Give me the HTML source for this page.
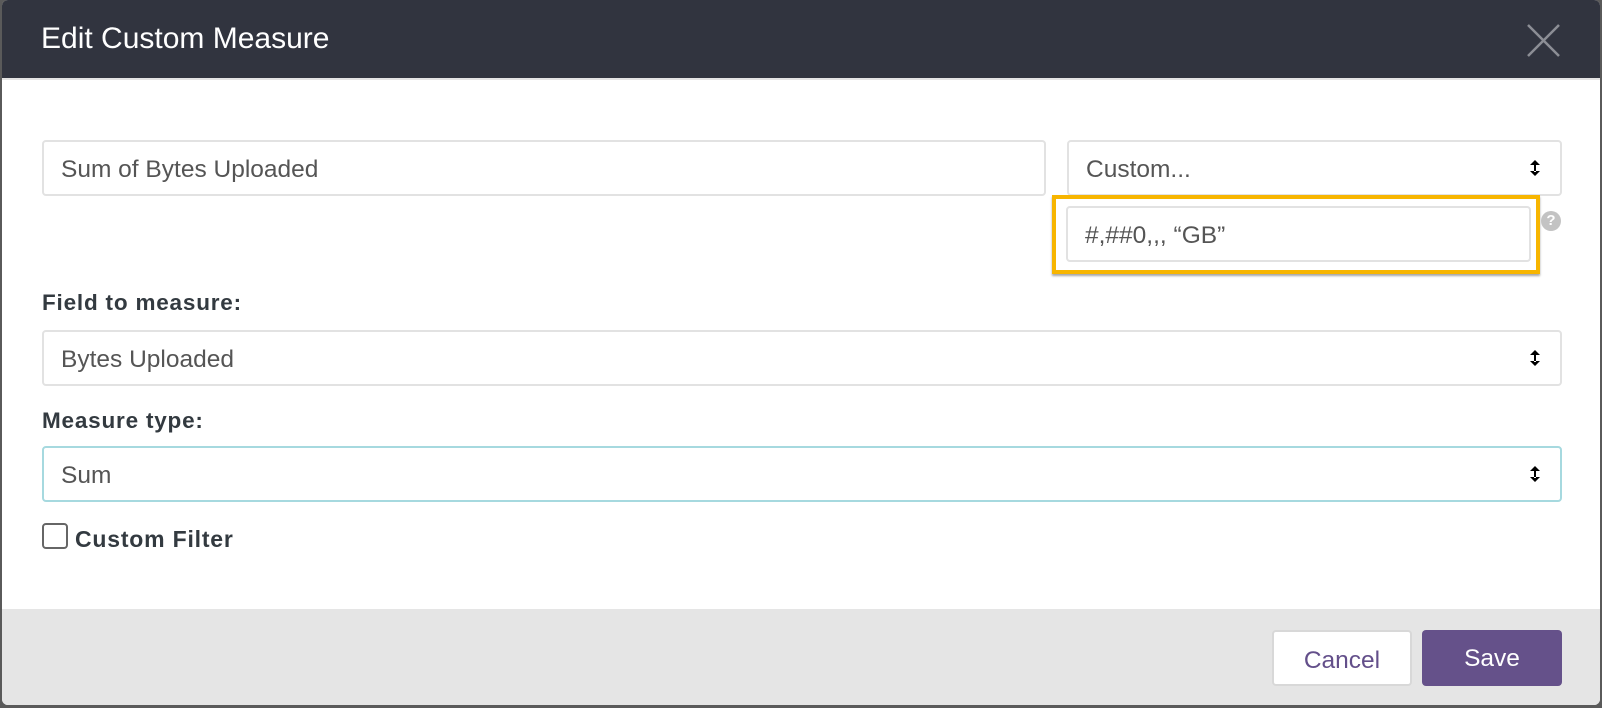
<!DOCTYPE html>
<html><head><style>
*{box-sizing:border-box;margin:0;padding:0}
body{width:1602px;height:708px;background:#5a5a5a;position:relative;overflow:hidden;font-family:"Liberation Sans",sans-serif}
.modal{position:absolute;left:2px;top:0;width:1598px;height:705px;background:#fff;border-radius:6px;overflow:hidden}
.hdr{position:absolute;left:0;top:0;width:100%;height:80px;background:#31343f;border-bottom:2px solid #e4e4e4}
.hdr .t{position:absolute;left:39px;top:22px;color:#fff;font-size:30px}
.inp{position:absolute;border:2px solid #e2e2e2;border-radius:4px;background:#fff;color:#555;font-size:24.5px;padding-left:17px;line-height:56px}
.arr{position:absolute;right:20px;top:18px}
.lbl{position:absolute;left:40px;font-weight:bold;font-size:22.5px;color:#333a40;letter-spacing:.8px}
.foot{position:absolute;left:0;top:609px;width:100%;height:96px;background:#e5e5e5}
.btn{position:absolute;top:630px;height:56px;border-radius:4px;font-size:24.5px;text-align:center;line-height:57px}
</style></head><body>
<div class="modal">
<div class="hdr"><div class="t">Edit Custom Measure</div>
<svg style="position:absolute;left:1524px;top:24px" width="36" height="34"><path d="M2 1L33 32M33 1L2 32" stroke="#8c8e95" stroke-width="2.5"/></svg></div>
<div class="inp" style="left:40px;top:140px;width:1004px;height:56px">Sum of Bytes Uploaded</div>
<div class="inp" style="left:1065px;top:140px;width:495px;height:56px">Custom...<svg class="arr" width="10" height="16"><path d="M5 0L10 5H0ZM5 16L10 11H0ZM4 4h2v8H4Z" fill="#000"/></svg></div>
<div style="position:absolute;left:1050px;top:195px;width:488px;height:79px;border:4px solid #f7b500;box-shadow:0 2px 2px rgba(0,0,0,.35)"></div>
<div class="inp" style="left:1064px;top:206px;width:465px;height:56px">#,##0,,, “GB”</div>
<div style="position:absolute;left:1539px;top:211px;width:20px;height:20px;border-radius:50%;background:#c3c3c3;color:#fff;font-size:15px;font-weight:bold;text-align:center;line-height:20px">?</div>
<div class="lbl" style="top:290px">Field to measure:</div>
<div class="inp" style="left:40px;top:330px;width:1520px;height:56px">Bytes Uploaded<svg class="arr" width="10" height="16"><path d="M5 0L10 5H0ZM5 16L10 11H0ZM4 4h2v8H4Z" fill="#000"/></svg></div>
<div class="lbl" style="top:408px">Measure type:</div>
<div class="inp" style="left:40px;top:446px;width:1520px;height:56px;border-color:#a6d9df">Sum<svg class="arr" width="10" height="16"><path d="M5 0L10 5H0ZM5 16L10 11H0ZM4 4h2v8H4Z" fill="#000"/></svg></div>
<div style="position:absolute;left:40px;top:523px;width:26px;height:26px;border:2px solid #666;border-radius:4px"></div>
<div class="lbl" style="left:73px;top:526px;font-size:23px">Custom Filter</div>
<div class="foot"></div>
<div class="btn" style="left:1270px;width:140px;background:#fff;border:2px solid #d8d8d8;color:#634f8a">Cancel</div>
<div class="btn" style="left:1420px;width:140px;background:#65518a;color:#fff">Save</div>
</div>
</body></html>
